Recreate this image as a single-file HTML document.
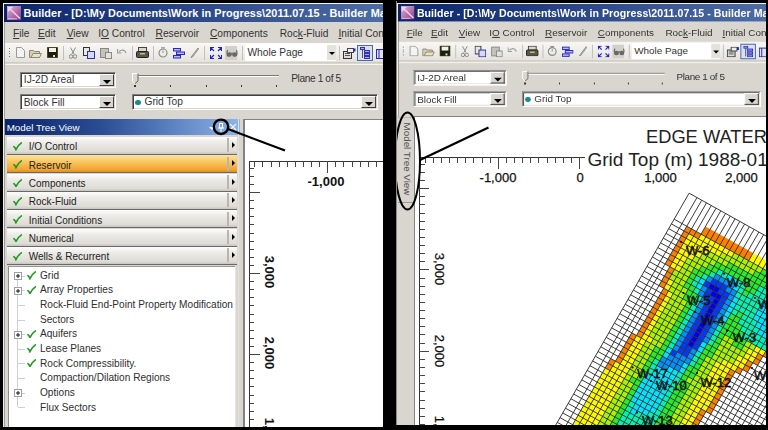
<!DOCTYPE html>
<html><head><meta charset="utf-8">
<style>
*{box-sizing:border-box}
html,body{margin:0;padding:0}
body{width:768px;height:430px;background:#000;position:relative;overflow:hidden;font-family:"Liberation Sans",sans-serif;color:#1a1a1a}
.a{position:absolute}
.chrome{position:absolute;left:0;top:0;width:382px;height:117px;background:#d9d6cf;transform-origin:0 0}
.title{left:1px;top:1px;width:381px;height:18px;background:linear-gradient(90deg,#0a246a 0px,#a6caf0 880px)}
.combo{background:#fff;border:1px solid #808080;border-right-color:#fff;border-bottom-color:#fff;box-shadow:inset 1px 1px 0 #404040, inset -1px -1px 0 #d9d6cf}
.dd{position:absolute;top:1px;right:1px;bottom:1px;width:15px;background:#d9d6cf;border:1px solid;border-color:#fff #404040 #404040 #fff}
.dd:after{content:"";position:absolute;left:3px;top:5px;border-left:4px solid transparent;border-right:4px solid transparent;border-top:4px solid #000}
.btn{position:absolute;left:3.8px;width:230.5px;height:18.2px;background:linear-gradient(#fdfdfc,#eceae6 35%,#dedcd6 85%,#c6c4be);border-bottom:1.6px solid #6a6a6a}
.btn.or{background:linear-gradient(#fde4a0,#f8c660 40%,#f2a532 85%,#e09020)}
.btn .bt{position:absolute;left:22px;top:5.4px;font-size:10px;line-height:1;white-space:nowrap;color:#222}
.btn .sp{position:absolute;left:220.5px;top:1.5px;width:1.5px;height:14px;background:#b8b6b0}
.btn .ar{position:absolute;left:225px;top:5px;border-top:3px solid transparent;border-bottom:3px solid transparent;border-left:3px solid #000}
.ck{position:absolute}
.tri{position:absolute;font-size:10.2px;line-height:1;white-space:nowrap;color:#222}
</style></head><body>

<!-- ================= LEFT PANEL ================= -->
<div class="a" id="L" style="left:3px;top:3px;width:380px;height:424px;background:#d9d6cf;overflow:hidden">
  <div class="chrome"><div class="a" style="left:0;top:0;width:382px;height:1px;background:#f4f3ee"></div>
<div class="a" style="left:0;top:0;width:1px;height:116px;background:#f4f3ee"></div>
<div class="a" style="left:1px;top:1px;width:1px;height:116px;background:#a09e98"></div>
<div class="a title"></div>
<svg class="a" style="left:3.5px;top:3px" width="14" height="14" viewBox="0 0 14 14"><defs><linearGradient id="ig" x1="0" y1="0" x2="1" y2="1"><stop offset="0" stop-color="#e2b4de"/><stop offset="1" stop-color="#8a3a80"/></linearGradient></defs><rect width="14" height="14" fill="url(#ig)"/><path d="M1 1 L6 1 L1 6z" fill="#f4dcf2"/><path d="M2 2 L13 12.5" stroke="#f0d0ee" stroke-width="1.5" fill="none"/><rect x="1" y="12.3" width="9" height="0.9" fill="#f0dcee" opacity="0.8"/></svg>
<div class="a " style="left:20.5px;top:4.67px;font-size:10.9px;line-height:1;white-space:nowrap;font-weight:bold;color:#fff;letter-spacing:0.065px">Builder - [D:\My Documents\Work in Progress\2011.07.15 - Builder Manager]</div>
<div class="a " style="left:10px;top:26.17px;font-size:10.2px;line-height:1;white-space:nowrap;color:#333"><u>F</u>ile</div>
<div class="a " style="left:35px;top:26.17px;font-size:10.2px;line-height:1;white-space:nowrap;color:#333"><u>E</u>dit</div>
<div class="a " style="left:63.7px;top:26.17px;font-size:10.2px;line-height:1;white-space:nowrap;color:#333"><u>V</u>iew</div>
<div class="a " style="left:95.2px;top:26.17px;font-size:10.2px;line-height:1;white-space:nowrap;color:#333">I<u>O</u> Control</div>
<div class="a " style="left:152.6px;top:26.17px;font-size:10.2px;line-height:1;white-space:nowrap;color:#333"><u>R</u>eservoir</div>
<div class="a " style="left:207px;top:26.17px;font-size:10.2px;line-height:1;white-space:nowrap;color:#333"><u>C</u>omponents</div>
<div class="a " style="left:276.7px;top:26.17px;font-size:10.2px;line-height:1;white-space:nowrap;color:#333">Roc<u>k</u>-Fluid</div>
<div class="a " style="left:335.5px;top:26.17px;font-size:10.2px;line-height:1;white-space:nowrap;color:#333"><u>I</u>nitial Conditions</div>
<div class="a" style="left:2px;top:39.8px;width:380px;height:19px;background:linear-gradient(#f7f6f3,#eeece8 55%,#e4e2dc);border-top:1px solid #fbfbf9"></div>
<div class="a" style="left:2px;top:58.5px;width:380px;height:1.5px;background:#cfccc5"></div>
<div class="a" style="left:2px;top:60.5px;width:380px;height:1px;background:#f6f5f2"></div>
<div class="a" style="left:6px;top:45.0px;width:1.2px;height:1.2px;background:#777"></div>
<div class="a" style="left:6px;top:47.5px;width:1.2px;height:1.2px;background:#777"></div>
<div class="a" style="left:6px;top:50.0px;width:1.2px;height:1.2px;background:#777"></div>
<div class="a" style="left:6px;top:52.5px;width:1.2px;height:1.2px;background:#777"></div>
<svg class="a" style="left:12px;top:44px" width="11" height="11"><path d="M1.5 0.5h5l3 3v7h-8z" fill="#f4f4f2" stroke="#9a9a96"/></svg>
<svg class="a" style="left:26px;top:44px" width="13" height="11"><path d="M0.5 3.5h4l1 1h5v6h-10z" fill="#d8cfa8" stroke="#8c887c"/><path d="M2 10.5l2-4h8.5l-2 4z" fill="#e8e2c4" stroke="#8c887c"/></svg>
<svg class="a" style="left:44px;top:44px" width="11" height="11"><rect x="0" y="0" width="11" height="11" fill="#1c1c10"/><rect x="2" y="1" width="7" height="4" fill="#f2f2ea"/><rect x="0" y="0" width="11" height="11" fill="none" stroke="#7a7a20" stroke-width="1"/><rect x="6" y="8" width="2" height="2" fill="#ddd"/></svg>
<div class="a" style="left:59.5px;top:43px;width:1px;height:14px;background:#c2c0ba"></div>
<svg class="a" style="left:66px;top:44px" width="8" height="12"><path d="M1.5 0.5 L5 7 M6.5 0.5 L3 7" stroke="#8a8a86" stroke-width="1" fill="none"/><circle cx="2" cy="9.5" r="1.8" fill="none" stroke="#8a8a86"/><circle cx="6" cy="9.5" r="1.8" fill="none" stroke="#8a8a86"/></svg>
<svg class="a" style="left:80px;top:44px" width="12" height="12"><rect x="0.5" y="0.5" width="6" height="8" fill="#e8e8e4" stroke="#333"/><rect x="4.5" y="4.5" width="7" height="7" fill="#d6d8f0" stroke="#3030b0"/></svg>
<svg class="a" style="left:97px;top:44px" width="12" height="12"><rect x="0.5" y="1.5" width="8" height="9" fill="#c4c2bc" stroke="#8a8884"/><rect x="5.5" y="5.5" width="6" height="6" fill="#e4e2dc" stroke="#8a8884"/></svg>
<svg class="a" style="left:114px;top:45px" width="10" height="9"><path d="M2 3.5 Q7 0 9 5" stroke="#9a9894" stroke-width="1.2" fill="none"/><path d="M0.5 1v4h4" stroke="#9a9894" stroke-width="1.2" fill="none"/></svg>
<div class="a" style="left:128.5px;top:43px;width:1px;height:14px;background:#c2c0ba"></div>
<svg class="a" style="left:132.5px;top:44px" width="13" height="11"><rect x="2.5" y="0.5" width="8" height="4" fill="#d8d8d0" stroke="#444"/><rect x="0.5" y="4.5" width="12" height="6" rx="1" fill="#555" stroke="#222"/><rect x="4" y="6" width="5" height="1.5" fill="#d8c040"/></svg>
<div class="a" style="left:149.5px;top:43px;width:1px;height:14px;background:#c2c0ba"></div>
<svg class="a" style="left:154.5px;top:44px" width="10" height="11"><circle cx="5" cy="6" r="4" fill="none" stroke="#8c8a84" stroke-width="1.2"/><path d="M5 6V3.5M3 0.8h4" stroke="#8c8a84"/></svg>
<svg class="a" style="left:170px;top:44px" width="12" height="12"><rect x="0.5" y="1.5" width="7" height="2.5" fill="#b8bcf0" stroke="#2828c0"/><rect x="3.5" y="5" width="8" height="2.5" fill="#b8bcf0" stroke="#2828c0"/><rect x="0.5" y="8.5" width="7" height="2.5" fill="#b8bcf0" stroke="#2828c0"/></svg>
<svg class="a" style="left:186.5px;top:44px" width="9" height="11"><path d="M8 1 L2 9 L1 10.5 L2.5 10 L8.5 2z" fill="#e8e6e0" stroke="#8c8a84"/></svg>
<div class="a" style="left:200.5px;top:43px;width:1px;height:14px;background:#c2c0ba"></div>
<svg class="a" style="left:207px;top:44px" width="12" height="12"><path d="M0.5 4V0.5H4M8 0.5h3.5V4M11.5 8v3.5H8M4 11.5H0.5V8M1 1l3 3M11 1l-3 3M11 11l-3-3M1 11l3-3" stroke="#2020c8" stroke-width="1.2" fill="none"/></svg>
<div class="a" style="left:222px;top:43px;width:12px;height:14px;background:#d2d0ca"></div>
<svg class="a" style="left:222.5px;top:46px" width="12" height="9"><path d="M1.5 1 L0.8 4.5" stroke="#6a6864" stroke-width="1.2"/><path d="M10.5 1 L11.2 4.5" stroke="#6a6864" stroke-width="1.2"/><ellipse cx="3.2" cy="5.5" rx="2.6" ry="2.3" fill="#6a6864"/><ellipse cx="8.8" cy="5.5" rx="2.6" ry="2.3" fill="#6a6864"/><path d="M5 4.5 Q6 3.5 7 4.5" stroke="#6a6864" stroke-width="1" fill="none"/></svg>
<div class="a" style="left:238.5px;top:43px;width:1px;height:14px;background:#c2c0ba"></div>
<div class="a" style="left:242px;top:41px;width:91px;height:17px;background:#fff"></div>
<div class="a" style="left:323.5px;top:42px;width:9.5px;height:15px;background:#e4e2dc"></div>
<div class="a" style="left:325.5px;top:48.5px;border-left:3px solid transparent;border-right:3px solid transparent;border-top:3px solid #000"></div>
<div class="a " style="left:244.5px;top:45.07px;font-size:10.2px;line-height:1;white-space:nowrap;color:#333">Whole Page</div>
<div class="a" style="left:335.5px;top:43px;width:1px;height:14px;background:#c2c0ba"></div>
<svg class="a" style="left:339.5px;top:45px" width="13" height="11"><rect x="0.5" y="3.5" width="8" height="7" fill="#ddd" stroke="#333"/><path d="M2 5.5h5M2 7.5h5" stroke="#555"/><rect x="4.5" y="0.5" width="6" height="4" fill="#eee" stroke="#444"/><rect x="10.5" y="0.5" width="2" height="3" fill="#2828b0"/></svg>
<div class="a" style="left:354px;top:42px;width:16px;height:16px;background:#dde0ea;border:1px solid #4a6aa8"></div>
<svg class="a" style="left:357px;top:44px" width="10" height="12"><rect x="0.5" y="0.5" width="4" height="2" fill="#a8b0f0" stroke="#3030c0"/><path d="M2.5 2.5V11" stroke="#555"/><rect x="4.5" y="3.5" width="5" height="2" fill="#a8b0f0" stroke="#3030c0"/><rect x="4.5" y="6.5" width="5" height="2" fill="#a8b0f0" stroke="#3030c0"/><rect x="4.5" y="9.5" width="5" height="2" fill="#a8b0f0" stroke="#3030c0"/></svg>
<svg class="a" style="left:373px;top:45px" width="10" height="11"><rect x="0.5" y="1.5" width="8" height="9" fill="#e0e0f0" stroke="#2828b0"/><path d="M3 1.5v9" stroke="#2828b0"/><circle cx="9" cy="1.5" r="1.5" fill="#c8b820"/></svg>
<div class="a combo" style="left:17.3px;top:68.5px;width:95.3px;height:16px"><div class="dd"></div><div class="a " style="left:2.5px;top:2.97px;font-size:10.2px;line-height:1;white-space:nowrap;color:#333">IJ-2D Areal</div></div>
<div class="a combo" style="left:17.3px;top:90.9px;width:95.3px;height:16px"><div class="dd"></div><div class="a " style="left:2.5px;top:2.97px;font-size:10.2px;line-height:1;white-space:nowrap;color:#333">Block Fill</div></div>
<div class="a combo" style="left:129px;top:90.5px;width:245.7px;height:16px"><div class="dd"></div><div class="a" style="left:2.2px;top:5.4px;width:5.5px;height:5.5px;border-radius:50%;background:#1a8a8a"></div><div class="a " style="left:11.5px;top:2.97px;font-size:10.2px;line-height:1;white-space:nowrap;color:#333">Grid Top</div></div>
<div class="a" style="left:132px;top:72px;width:144px;height:1px;background:#7a7872"></div>
<div class="a" style="left:132px;top:73px;width:144px;height:1px;background:#fff"></div>
<svg class="a" style="left:128.5px;top:69.5px" width="7" height="11"><path d="M0.5 0.5h5.5v7.5l-3 2.5l-2.5-2.5z" fill="#d9d6cf" stroke="#fff"/><path d="M6 0.5v7.5l-3 2.5" stroke="#555" fill="none"/></svg>
<div class="a" style="left:131.4px;top:82.3px;width:1.2px;height:1.5px;background:#333"></div>
<div class="a" style="left:166.7px;top:82.3px;width:1.2px;height:1.5px;background:#333"></div>
<div class="a" style="left:202.5px;top:82.3px;width:1.2px;height:1.5px;background:#333"></div>
<div class="a" style="left:238px;top:82.3px;width:1.2px;height:1.5px;background:#333"></div>
<div class="a" style="left:273px;top:82.3px;width:1.2px;height:1.5px;background:#333"></div>
<div class="a " style="left:288.2px;top:70.67px;font-size:10.2px;line-height:1;white-space:nowrap;color:#333;letter-spacing:-0.4px">Plane 1 of 5</div></div>
  <div class="a" style="left:2px;top:116px;width:235px;height:16px;background:linear-gradient(90deg,#0a246a 0%,#2a4c92 40%,#5a80c0 70%,#90b4e6 100%)"></div>
<div class="a " style="left:3.7px;top:120.00px;font-size:9.8px;line-height:1;white-space:nowrap;color:#fff">Model Tree View</div>
<div class="a" style="left:205.5px;top:123.5px;border-left:3px solid transparent;border-right:3px solid transparent;border-top:3px solid #fff"></div>
<svg class="a" style="left:213px;top:119px" width="10" height="11"><path d="M3 1.5h4M3.5 1.5v4.5h3v-4.5M2 6h6M5 6v4" stroke="#fff" stroke-width="1" fill="none"/></svg>
<svg class="a" style="left:226px;top:120px" width="8" height="8"><path d="M1 1l6 6M7 1l-6 6" stroke="#eef4ff" stroke-width="1.2"/></svg>
<div class="btn" style="top:133.90px"><svg class="ck" style="left:5.8px;top:5.2px" width="9" height="8.5" viewBox="0 0 9 8.5"><path d="M0.9 4.6 Q2.1 5.4 2.9 7.6 Q4.9 3.2 8.4 0.9" stroke="#1e9a1e" stroke-width="1.6" fill="none" stroke-linecap="round"/></svg><div class="bt">I/O Control</div><div class="sp"></div><div class="ar"></div></div>
<div class="btn or" style="top:152.23px"><svg class="ck" style="left:5.8px;top:5.2px" width="9" height="8.5" viewBox="0 0 9 8.5"><path d="M0.9 4.6 Q2.1 5.4 2.9 7.6 Q4.9 3.2 8.4 0.9" stroke="#1e9a1e" stroke-width="1.6" fill="none" stroke-linecap="round"/></svg><div class="bt">Reservoir</div><div class="sp"></div><div class="ar"></div></div>
<div class="btn" style="top:170.56px"><svg class="ck" style="left:5.8px;top:5.2px" width="9" height="8.5" viewBox="0 0 9 8.5"><path d="M0.9 4.6 Q2.1 5.4 2.9 7.6 Q4.9 3.2 8.4 0.9" stroke="#1e9a1e" stroke-width="1.6" fill="none" stroke-linecap="round"/></svg><div class="bt">Components</div><div class="sp"></div><div class="ar"></div></div>
<div class="btn" style="top:188.89px"><svg class="ck" style="left:5.8px;top:5.2px" width="9" height="8.5" viewBox="0 0 9 8.5"><path d="M0.9 4.6 Q2.1 5.4 2.9 7.6 Q4.9 3.2 8.4 0.9" stroke="#1e9a1e" stroke-width="1.6" fill="none" stroke-linecap="round"/></svg><div class="bt">Rock-Fluid</div><div class="sp"></div><div class="ar"></div></div>
<div class="btn" style="top:207.22px"><svg class="ck" style="left:5.8px;top:5.2px" width="9" height="8.5" viewBox="0 0 9 8.5"><path d="M0.9 4.6 Q2.1 5.4 2.9 7.6 Q4.9 3.2 8.4 0.9" stroke="#1e9a1e" stroke-width="1.6" fill="none" stroke-linecap="round"/></svg><div class="bt">Initial Conditions</div><div class="sp"></div><div class="ar"></div></div>
<div class="btn" style="top:225.55px"><svg class="ck" style="left:5.8px;top:5.2px" width="9" height="8.5" viewBox="0 0 9 8.5"><path d="M0.9 4.6 Q2.1 5.4 2.9 7.6 Q4.9 3.2 8.4 0.9" stroke="#1e9a1e" stroke-width="1.6" fill="none" stroke-linecap="round"/></svg><div class="bt">Numerical</div><div class="sp"></div><div class="ar"></div></div>
<div class="btn" style="top:243.88px"><svg class="ck" style="left:5.8px;top:5.2px" width="9" height="8.5" viewBox="0 0 9 8.5"><path d="M0.9 4.6 Q2.1 5.4 2.9 7.6 Q4.9 3.2 8.4 0.9" stroke="#1e9a1e" stroke-width="1.6" fill="none" stroke-linecap="round"/></svg><div class="bt">Wells &amp; Recurrent</div><div class="sp"></div><div class="ar"></div></div>
<div class="a" style="left:0;top:116px;width:1px;height:310px;background:#f2f1ec"></div>
<div class="a" style="left:1px;top:116px;width:1.2px;height:310px;background:#9c9a94"></div>
<div class="a" style="left:4.7px;top:263px;width:227.5px;height:170px;background:#fff;border-left:1.5px solid #8e8c86;border-top:1px solid #9a9892"></div>
<div class="a" style="left:14.3px;top:272.6px;width:1px;height:131.8px;border-left:1px solid #cfcfcf"></div>
<div class="a" style="left:15px;top:272.6px;width:7px;height:1px;border-top:1px solid #cfcfcf"></div>
<svg class="a" style="left:11px;top:269.1px" width="8" height="8"><rect x="0.5" y="0.5" width="7" height="7" fill="#fff" stroke="#a0a0a0"/><path d="M2 4h4M4 2v4" stroke="#111" stroke-width="1"/></svg>
<svg class="ck" style="left:24.2px;top:268.1px" width="9" height="8.5" viewBox="0 0 9 8.5"><path d="M0.9 4.6 Q2.1 5.4 2.9 7.6 Q4.9 3.2 8.4 0.9" stroke="#1e9a1e" stroke-width="1.6" fill="none" stroke-linecap="round"/></svg>
<div class="a " style="left:37px;top:267.75px;font-size:10.1px;line-height:1;white-space:nowrap;color:#2e2e2e">Grid</div>
<div class="a" style="left:15px;top:287.2px;width:7px;height:1px;border-top:1px solid #cfcfcf"></div>
<svg class="a" style="left:11px;top:283.7px" width="8" height="8"><rect x="0.5" y="0.5" width="7" height="7" fill="#fff" stroke="#a0a0a0"/><path d="M2 4h4M4 2v4" stroke="#111" stroke-width="1"/></svg>
<svg class="ck" style="left:24.2px;top:282.7px" width="9" height="8.5" viewBox="0 0 9 8.5"><path d="M0.9 4.6 Q2.1 5.4 2.9 7.6 Q4.9 3.2 8.4 0.9" stroke="#1e9a1e" stroke-width="1.6" fill="none" stroke-linecap="round"/></svg>
<div class="a " style="left:37px;top:282.39px;font-size:10.1px;line-height:1;white-space:nowrap;color:#2e2e2e">Array Properties</div>
<div class="a" style="left:15px;top:301.9px;width:7px;height:1px;border-top:1px solid #cfcfcf"></div>
<div class="a " style="left:37px;top:297.03px;font-size:10.1px;line-height:1;white-space:nowrap;color:#2e2e2e">Rock-Fluid End-Point Property Modification</div>
<div class="a" style="left:15px;top:316.5px;width:7px;height:1px;border-top:1px solid #cfcfcf"></div>
<div class="a " style="left:37px;top:311.67px;font-size:10.1px;line-height:1;white-space:nowrap;color:#2e2e2e">Sectors</div>
<div class="a" style="left:15px;top:331.2px;width:7px;height:1px;border-top:1px solid #cfcfcf"></div>
<svg class="a" style="left:11px;top:327.7px" width="8" height="8"><rect x="0.5" y="0.5" width="7" height="7" fill="#fff" stroke="#a0a0a0"/><path d="M2 4h4M4 2v4" stroke="#111" stroke-width="1"/></svg>
<svg class="ck" style="left:24.2px;top:326.7px" width="9" height="8.5" viewBox="0 0 9 8.5"><path d="M0.9 4.6 Q2.1 5.4 2.9 7.6 Q4.9 3.2 8.4 0.9" stroke="#1e9a1e" stroke-width="1.6" fill="none" stroke-linecap="round"/></svg>
<div class="a " style="left:37px;top:326.31px;font-size:10.1px;line-height:1;white-space:nowrap;color:#2e2e2e">Aquifers</div>
<div class="a" style="left:15px;top:345.8px;width:7px;height:1px;border-top:1px solid #cfcfcf"></div>
<svg class="ck" style="left:24.2px;top:341.3px" width="9" height="8.5" viewBox="0 0 9 8.5"><path d="M0.9 4.6 Q2.1 5.4 2.9 7.6 Q4.9 3.2 8.4 0.9" stroke="#1e9a1e" stroke-width="1.6" fill="none" stroke-linecap="round"/></svg>
<div class="a " style="left:37px;top:340.95px;font-size:10.1px;line-height:1;white-space:nowrap;color:#2e2e2e">Lease Planes</div>
<div class="a" style="left:15px;top:360.4px;width:7px;height:1px;border-top:1px solid #cfcfcf"></div>
<svg class="ck" style="left:24.2px;top:355.9px" width="9" height="8.5" viewBox="0 0 9 8.5"><path d="M0.9 4.6 Q2.1 5.4 2.9 7.6 Q4.9 3.2 8.4 0.9" stroke="#1e9a1e" stroke-width="1.6" fill="none" stroke-linecap="round"/></svg>
<div class="a " style="left:37px;top:355.59px;font-size:10.1px;line-height:1;white-space:nowrap;color:#2e2e2e">Rock Compressibility.</div>
<div class="a" style="left:15px;top:375.1px;width:7px;height:1px;border-top:1px solid #cfcfcf"></div>
<div class="a " style="left:37px;top:370.23px;font-size:10.1px;line-height:1;white-space:nowrap;color:#2e2e2e">Compaction/Dilation Regions</div>
<div class="a" style="left:15px;top:389.7px;width:7px;height:1px;border-top:1px solid #cfcfcf"></div>
<svg class="a" style="left:11px;top:386.2px" width="8" height="8"><rect x="0.5" y="0.5" width="7" height="7" fill="#fff" stroke="#a0a0a0"/><path d="M2 4h4M4 2v4" stroke="#111" stroke-width="1"/></svg>
<div class="a " style="left:37px;top:384.87px;font-size:10.1px;line-height:1;white-space:nowrap;color:#2e2e2e">Options</div>
<div class="a" style="left:15px;top:404.4px;width:7px;height:1px;border-top:1px solid #cfcfcf"></div>
<div class="a " style="left:37px;top:399.51px;font-size:10.1px;line-height:1;white-space:nowrap;color:#2e2e2e">Flux Sectors</div>
<div class="a" style="left:232px;top:263px;width:1px;height:170px;background:#e8e6e0"></div>
<div class="a" style="left:234.5px;top:116px;width:1px;height:310px;background:#e4e2dc"></div>
<div class="a" style="left:239.5px;top:116.3px;width:2px;height:310px;background:#848280"></div>
<div class="a" style="left:241.5px;top:116.3px;width:140px;height:310px;background:#fff;border-top:1px solid #848280"></div>
<div class="a" style="left:245.6px;top:158.2px;width:140px;height:1.2px;background:#333"></div>
<div class="a" style="left:245.6px;top:158.2px;width:1.2px;height:270px;background:#333"></div>
<div class="a" style="left:251.3px;top:158.2px;width:1.1px;height:5.8px;background:#444"></div>
<div class="a" style="left:259.4px;top:158.2px;width:1.1px;height:5.8px;background:#444"></div>
<div class="a" style="left:267.5px;top:158.2px;width:1.1px;height:5.8px;background:#444"></div>
<div class="a" style="left:275.6px;top:158.2px;width:1.1px;height:5.8px;background:#444"></div>
<div class="a" style="left:283.7px;top:158.2px;width:1.1px;height:5.8px;background:#444"></div>
<div class="a" style="left:291.8px;top:158.2px;width:1.1px;height:5.8px;background:#444"></div>
<div class="a" style="left:299.9px;top:158.2px;width:1.1px;height:5.8px;background:#444"></div>
<div class="a" style="left:308.0px;top:158.2px;width:1.1px;height:5.8px;background:#444"></div>
<div class="a" style="left:316.1px;top:158.2px;width:1.1px;height:5.8px;background:#444"></div>
<div class="a" style="left:324.2px;top:158.2px;width:1.1px;height:11.6px;background:#444"></div>
<div class="a" style="left:332.3px;top:158.2px;width:1.1px;height:5.8px;background:#444"></div>
<div class="a" style="left:340.4px;top:158.2px;width:1.1px;height:5.8px;background:#444"></div>
<div class="a" style="left:348.5px;top:158.2px;width:1.1px;height:5.8px;background:#444"></div>
<div class="a" style="left:356.6px;top:158.2px;width:1.1px;height:5.8px;background:#444"></div>
<div class="a" style="left:364.7px;top:158.2px;width:1.1px;height:5.8px;background:#444"></div>
<div class="a" style="left:372.8px;top:158.2px;width:1.1px;height:5.8px;background:#444"></div>
<div class="a" style="left:380.9px;top:158.2px;width:1.1px;height:5.8px;background:#444"></div>
<div class="a" style="left:245.6px;top:164.7px;width:5.7px;height:1.1px;background:#444"></div>
<div class="a" style="left:245.6px;top:172.8px;width:5.7px;height:1.1px;background:#444"></div>
<div class="a" style="left:245.6px;top:180.9px;width:5.7px;height:1.1px;background:#444"></div>
<div class="a" style="left:245.6px;top:189.0px;width:11px;height:1.1px;background:#444"></div>
<div class="a" style="left:245.6px;top:197.1px;width:5.7px;height:1.1px;background:#444"></div>
<div class="a" style="left:245.6px;top:205.2px;width:5.7px;height:1.1px;background:#444"></div>
<div class="a" style="left:245.6px;top:213.3px;width:5.7px;height:1.1px;background:#444"></div>
<div class="a" style="left:245.6px;top:221.4px;width:5.7px;height:1.1px;background:#444"></div>
<div class="a" style="left:245.6px;top:229.5px;width:5.7px;height:1.1px;background:#444"></div>
<div class="a" style="left:245.6px;top:237.6px;width:5.7px;height:1.1px;background:#444"></div>
<div class="a" style="left:245.6px;top:245.7px;width:5.7px;height:1.1px;background:#444"></div>
<div class="a" style="left:245.6px;top:253.8px;width:5.7px;height:1.1px;background:#444"></div>
<div class="a" style="left:245.6px;top:261.9px;width:5.7px;height:1.1px;background:#444"></div>
<div class="a" style="left:245.6px;top:270.0px;width:11px;height:1.1px;background:#444"></div>
<div class="a" style="left:245.6px;top:278.1px;width:5.7px;height:1.1px;background:#444"></div>
<div class="a" style="left:245.6px;top:286.2px;width:5.7px;height:1.1px;background:#444"></div>
<div class="a" style="left:245.6px;top:294.3px;width:5.7px;height:1.1px;background:#444"></div>
<div class="a" style="left:245.6px;top:302.4px;width:5.7px;height:1.1px;background:#444"></div>
<div class="a" style="left:245.6px;top:310.5px;width:5.7px;height:1.1px;background:#444"></div>
<div class="a" style="left:245.6px;top:318.6px;width:5.7px;height:1.1px;background:#444"></div>
<div class="a" style="left:245.6px;top:326.7px;width:5.7px;height:1.1px;background:#444"></div>
<div class="a" style="left:245.6px;top:334.8px;width:5.7px;height:1.1px;background:#444"></div>
<div class="a" style="left:245.6px;top:342.9px;width:5.7px;height:1.1px;background:#444"></div>
<div class="a" style="left:245.6px;top:351.0px;width:11px;height:1.1px;background:#444"></div>
<div class="a" style="left:245.6px;top:359.1px;width:5.7px;height:1.1px;background:#444"></div>
<div class="a" style="left:245.6px;top:367.2px;width:5.7px;height:1.1px;background:#444"></div>
<div class="a" style="left:245.6px;top:375.3px;width:5.7px;height:1.1px;background:#444"></div>
<div class="a" style="left:245.6px;top:383.4px;width:5.7px;height:1.1px;background:#444"></div>
<div class="a" style="left:245.6px;top:391.5px;width:5.7px;height:1.1px;background:#444"></div>
<div class="a" style="left:245.6px;top:399.6px;width:5.7px;height:1.1px;background:#444"></div>
<div class="a" style="left:245.6px;top:407.7px;width:5.7px;height:1.1px;background:#444"></div>
<div class="a" style="left:245.6px;top:415.8px;width:5.7px;height:1.1px;background:#444"></div>
<div class="a" style="left:245.6px;top:423.9px;width:5.7px;height:1.1px;background:#444"></div>
<div class="a " style="left:304.5px;top:171.60px;font-size:13px;line-height:1;white-space:nowrap;font-weight:bold;color:#111">-1,000</div>
<div class="a" style="left:246px;top:262px;width:40px;height:14px;text-align:center;font-size:13px;line-height:14px;font-weight:bold;color:#111;transform:rotate(90deg)">3,000</div>
<div class="a" style="left:246px;top:343px;width:40px;height:14px;text-align:center;font-size:13px;line-height:14px;font-weight:bold;color:#111;transform:rotate(90deg)">2,000</div>
<div class="a" style="left:246px;top:424px;width:40px;height:14px;text-align:center;font-size:13px;line-height:14px;font-weight:bold;color:#111;transform:rotate(90deg)">1,000</div>
<svg class="a" style="left:0;top:0" width="380" height="424"><circle cx="218" cy="123.8" r="7.2" fill="none" stroke="#000" stroke-width="2.4"/><path d="M225 126 L282 147.5" stroke="#000" stroke-width="2.2"/></svg>
</div>

<!-- ================= RIGHT PANEL ================= -->
<div class="a" id="R" style="left:397px;top:3px;width:369px;height:422.4px;background:#d9d6cf;overflow:hidden">
  <div class="chrome" style="transform:scale(0.97)"><div class="a" style="left:0;top:0;width:382px;height:1px;background:#f4f3ee"></div>
<div class="a" style="left:0;top:0;width:1px;height:116px;background:#f4f3ee"></div>
<div class="a" style="left:1px;top:1px;width:1px;height:116px;background:#a09e98"></div>
<div class="a title"></div>
<svg class="a" style="left:3.5px;top:3px" width="14" height="14" viewBox="0 0 14 14"><defs><linearGradient id="ig" x1="0" y1="0" x2="1" y2="1"><stop offset="0" stop-color="#e2b4de"/><stop offset="1" stop-color="#8a3a80"/></linearGradient></defs><rect width="14" height="14" fill="url(#ig)"/><path d="M1 1 L6 1 L1 6z" fill="#f4dcf2"/><path d="M2 2 L13 12.5" stroke="#f0d0ee" stroke-width="1.5" fill="none"/><rect x="1" y="12.3" width="9" height="0.9" fill="#f0dcee" opacity="0.8"/></svg>
<div class="a " style="left:20.5px;top:4.67px;font-size:10.9px;line-height:1;white-space:nowrap;font-weight:bold;color:#fff;letter-spacing:0.065px">Builder - [D:\My Documents\Work in Progress\2011.07.15 - Builder Manager]</div>
<div class="a " style="left:10px;top:26.17px;font-size:10.2px;line-height:1;white-space:nowrap;color:#333"><u>F</u>ile</div>
<div class="a " style="left:35px;top:26.17px;font-size:10.2px;line-height:1;white-space:nowrap;color:#333"><u>E</u>dit</div>
<div class="a " style="left:63.7px;top:26.17px;font-size:10.2px;line-height:1;white-space:nowrap;color:#333"><u>V</u>iew</div>
<div class="a " style="left:95.2px;top:26.17px;font-size:10.2px;line-height:1;white-space:nowrap;color:#333">I<u>O</u> Control</div>
<div class="a " style="left:152.6px;top:26.17px;font-size:10.2px;line-height:1;white-space:nowrap;color:#333"><u>R</u>eservoir</div>
<div class="a " style="left:207px;top:26.17px;font-size:10.2px;line-height:1;white-space:nowrap;color:#333"><u>C</u>omponents</div>
<div class="a " style="left:276.7px;top:26.17px;font-size:10.2px;line-height:1;white-space:nowrap;color:#333">Roc<u>k</u>-Fluid</div>
<div class="a " style="left:335.5px;top:26.17px;font-size:10.2px;line-height:1;white-space:nowrap;color:#333"><u>I</u>nitial Conditions</div>
<div class="a" style="left:2px;top:39.8px;width:380px;height:19px;background:linear-gradient(#f7f6f3,#eeece8 55%,#e4e2dc);border-top:1px solid #fbfbf9"></div>
<div class="a" style="left:2px;top:58.5px;width:380px;height:1.5px;background:#cfccc5"></div>
<div class="a" style="left:2px;top:60.5px;width:380px;height:1px;background:#f6f5f2"></div>
<div class="a" style="left:6px;top:45.0px;width:1.2px;height:1.2px;background:#777"></div>
<div class="a" style="left:6px;top:47.5px;width:1.2px;height:1.2px;background:#777"></div>
<div class="a" style="left:6px;top:50.0px;width:1.2px;height:1.2px;background:#777"></div>
<div class="a" style="left:6px;top:52.5px;width:1.2px;height:1.2px;background:#777"></div>
<svg class="a" style="left:12px;top:44px" width="11" height="11"><path d="M1.5 0.5h5l3 3v7h-8z" fill="#f4f4f2" stroke="#9a9a96"/></svg>
<svg class="a" style="left:26px;top:44px" width="13" height="11"><path d="M0.5 3.5h4l1 1h5v6h-10z" fill="#d8cfa8" stroke="#8c887c"/><path d="M2 10.5l2-4h8.5l-2 4z" fill="#e8e2c4" stroke="#8c887c"/></svg>
<svg class="a" style="left:44px;top:44px" width="11" height="11"><rect x="0" y="0" width="11" height="11" fill="#1c1c10"/><rect x="2" y="1" width="7" height="4" fill="#f2f2ea"/><rect x="0" y="0" width="11" height="11" fill="none" stroke="#7a7a20" stroke-width="1"/><rect x="6" y="8" width="2" height="2" fill="#ddd"/></svg>
<div class="a" style="left:59.5px;top:43px;width:1px;height:14px;background:#c2c0ba"></div>
<svg class="a" style="left:66px;top:44px" width="8" height="12"><path d="M1.5 0.5 L5 7 M6.5 0.5 L3 7" stroke="#8a8a86" stroke-width="1" fill="none"/><circle cx="2" cy="9.5" r="1.8" fill="none" stroke="#8a8a86"/><circle cx="6" cy="9.5" r="1.8" fill="none" stroke="#8a8a86"/></svg>
<svg class="a" style="left:80px;top:44px" width="12" height="12"><rect x="0.5" y="0.5" width="6" height="8" fill="#e8e8e4" stroke="#333"/><rect x="4.5" y="4.5" width="7" height="7" fill="#d6d8f0" stroke="#3030b0"/></svg>
<svg class="a" style="left:97px;top:44px" width="12" height="12"><rect x="0.5" y="1.5" width="8" height="9" fill="#c4c2bc" stroke="#8a8884"/><rect x="5.5" y="5.5" width="6" height="6" fill="#e4e2dc" stroke="#8a8884"/></svg>
<svg class="a" style="left:114px;top:45px" width="10" height="9"><path d="M2 3.5 Q7 0 9 5" stroke="#9a9894" stroke-width="1.2" fill="none"/><path d="M0.5 1v4h4" stroke="#9a9894" stroke-width="1.2" fill="none"/></svg>
<div class="a" style="left:128.5px;top:43px;width:1px;height:14px;background:#c2c0ba"></div>
<svg class="a" style="left:132.5px;top:44px" width="13" height="11"><rect x="2.5" y="0.5" width="8" height="4" fill="#d8d8d0" stroke="#444"/><rect x="0.5" y="4.5" width="12" height="6" rx="1" fill="#555" stroke="#222"/><rect x="4" y="6" width="5" height="1.5" fill="#d8c040"/></svg>
<div class="a" style="left:149.5px;top:43px;width:1px;height:14px;background:#c2c0ba"></div>
<svg class="a" style="left:154.5px;top:44px" width="10" height="11"><circle cx="5" cy="6" r="4" fill="none" stroke="#8c8a84" stroke-width="1.2"/><path d="M5 6V3.5M3 0.8h4" stroke="#8c8a84"/></svg>
<svg class="a" style="left:170px;top:44px" width="12" height="12"><rect x="0.5" y="1.5" width="7" height="2.5" fill="#b8bcf0" stroke="#2828c0"/><rect x="3.5" y="5" width="8" height="2.5" fill="#b8bcf0" stroke="#2828c0"/><rect x="0.5" y="8.5" width="7" height="2.5" fill="#b8bcf0" stroke="#2828c0"/></svg>
<svg class="a" style="left:186.5px;top:44px" width="9" height="11"><path d="M8 1 L2 9 L1 10.5 L2.5 10 L8.5 2z" fill="#e8e6e0" stroke="#8c8a84"/></svg>
<div class="a" style="left:200.5px;top:43px;width:1px;height:14px;background:#c2c0ba"></div>
<svg class="a" style="left:207px;top:44px" width="12" height="12"><path d="M0.5 4V0.5H4M8 0.5h3.5V4M11.5 8v3.5H8M4 11.5H0.5V8M1 1l3 3M11 1l-3 3M11 11l-3-3M1 11l3-3" stroke="#2020c8" stroke-width="1.2" fill="none"/></svg>
<div class="a" style="left:222px;top:43px;width:12px;height:14px;background:#d2d0ca"></div>
<svg class="a" style="left:222.5px;top:46px" width="12" height="9"><path d="M1.5 1 L0.8 4.5" stroke="#6a6864" stroke-width="1.2"/><path d="M10.5 1 L11.2 4.5" stroke="#6a6864" stroke-width="1.2"/><ellipse cx="3.2" cy="5.5" rx="2.6" ry="2.3" fill="#6a6864"/><ellipse cx="8.8" cy="5.5" rx="2.6" ry="2.3" fill="#6a6864"/><path d="M5 4.5 Q6 3.5 7 4.5" stroke="#6a6864" stroke-width="1" fill="none"/></svg>
<div class="a" style="left:238.5px;top:43px;width:1px;height:14px;background:#c2c0ba"></div>
<div class="a" style="left:242px;top:41px;width:91px;height:17px;background:#fff"></div>
<div class="a" style="left:323.5px;top:42px;width:9.5px;height:15px;background:#e4e2dc"></div>
<div class="a" style="left:325.5px;top:48.5px;border-left:3px solid transparent;border-right:3px solid transparent;border-top:3px solid #000"></div>
<div class="a " style="left:244.5px;top:45.07px;font-size:10.2px;line-height:1;white-space:nowrap;color:#333">Whole Page</div>
<div class="a" style="left:335.5px;top:43px;width:1px;height:14px;background:#c2c0ba"></div>
<svg class="a" style="left:339.5px;top:45px" width="13" height="11"><rect x="0.5" y="3.5" width="8" height="7" fill="#ddd" stroke="#333"/><path d="M2 5.5h5M2 7.5h5" stroke="#555"/><rect x="4.5" y="0.5" width="6" height="4" fill="#eee" stroke="#444"/><rect x="10.5" y="0.5" width="2" height="3" fill="#2828b0"/></svg>
<div class="a" style="left:354px;top:42px;width:16px;height:16px;background:#dde0ea;border:1px solid #4a6aa8"></div>
<svg class="a" style="left:357px;top:44px" width="10" height="12"><rect x="0.5" y="0.5" width="4" height="2" fill="#a8b0f0" stroke="#3030c0"/><path d="M2.5 2.5V11" stroke="#555"/><rect x="4.5" y="3.5" width="5" height="2" fill="#a8b0f0" stroke="#3030c0"/><rect x="4.5" y="6.5" width="5" height="2" fill="#a8b0f0" stroke="#3030c0"/><rect x="4.5" y="9.5" width="5" height="2" fill="#a8b0f0" stroke="#3030c0"/></svg>
<svg class="a" style="left:373px;top:45px" width="10" height="11"><rect x="0.5" y="1.5" width="8" height="9" fill="#e0e0f0" stroke="#2828b0"/><path d="M3 1.5v9" stroke="#2828b0"/><circle cx="9" cy="1.5" r="1.5" fill="#c8b820"/></svg>
<div class="a combo" style="left:17.3px;top:68.5px;width:95.3px;height:16px"><div class="dd"></div><div class="a " style="left:2.5px;top:2.97px;font-size:10.2px;line-height:1;white-space:nowrap;color:#333">IJ-2D Areal</div></div>
<div class="a combo" style="left:17.3px;top:90.9px;width:95.3px;height:16px"><div class="dd"></div><div class="a " style="left:2.5px;top:2.97px;font-size:10.2px;line-height:1;white-space:nowrap;color:#333">Block Fill</div></div>
<div class="a combo" style="left:129px;top:90.5px;width:245.7px;height:16px"><div class="dd"></div><div class="a" style="left:2.2px;top:5.4px;width:5.5px;height:5.5px;border-radius:50%;background:#1a8a8a"></div><div class="a " style="left:11.5px;top:2.97px;font-size:10.2px;line-height:1;white-space:nowrap;color:#333">Grid Top</div></div>
<div class="a" style="left:132px;top:72px;width:144px;height:1px;background:#7a7872"></div>
<div class="a" style="left:132px;top:73px;width:144px;height:1px;background:#fff"></div>
<svg class="a" style="left:128.5px;top:69.5px" width="7" height="11"><path d="M0.5 0.5h5.5v7.5l-3 2.5l-2.5-2.5z" fill="#d9d6cf" stroke="#fff"/><path d="M6 0.5v7.5l-3 2.5" stroke="#555" fill="none"/></svg>
<div class="a" style="left:131.4px;top:82.3px;width:1.2px;height:1.5px;background:#333"></div>
<div class="a" style="left:166.7px;top:82.3px;width:1.2px;height:1.5px;background:#333"></div>
<div class="a" style="left:202.5px;top:82.3px;width:1.2px;height:1.5px;background:#333"></div>
<div class="a" style="left:238px;top:82.3px;width:1.2px;height:1.5px;background:#333"></div>
<div class="a" style="left:273px;top:82.3px;width:1.2px;height:1.5px;background:#333"></div>
<div class="a " style="left:288.2px;top:70.67px;font-size:10.2px;line-height:1;white-space:nowrap;color:#333;letter-spacing:-0.4px">Plane 1 of 5</div></div>
  <div class="a" style="left:1px;top:114.3px;width:16px;height:86px;background:#d8d5ce;border-top:1px solid #b8b6b0;border-bottom:1px solid #9a9892"></div>
<div class="a" style="left:-30px;top:150px;width:80px;height:12px;font-size:9.8px;line-height:12px;text-align:center;white-space:nowrap;color:#505050;transform:rotate(90deg)">Model Tree View</div>
<div class="a" style="left:17px;top:112.9px;width:360px;height:320px;background:#fff;border-left:1.5px solid #848280;border-top:1.4px solid #848280"></div>
<div class="a" style="left:21.8px;top:154.2px;width:166px;height:1.2px;background:#333"></div>
<div class="a" style="left:21.8px;top:154.2px;width:1.2px;height:270px;background:#333"></div>
<div class="a" style="left:27.6px;top:154.2px;width:1.1px;height:5.8px;background:#444"></div>
<div class="a" style="left:35.8px;top:154.2px;width:1.1px;height:5.8px;background:#444"></div>
<div class="a" style="left:43.9px;top:154.2px;width:1.1px;height:5.8px;background:#444"></div>
<div class="a" style="left:52.0px;top:154.2px;width:1.1px;height:5.8px;background:#444"></div>
<div class="a" style="left:60.1px;top:154.2px;width:1.1px;height:5.8px;background:#444"></div>
<div class="a" style="left:68.3px;top:154.2px;width:1.1px;height:5.8px;background:#444"></div>
<div class="a" style="left:76.4px;top:154.2px;width:1.1px;height:5.8px;background:#444"></div>
<div class="a" style="left:84.5px;top:154.2px;width:1.1px;height:5.8px;background:#444"></div>
<div class="a" style="left:92.7px;top:154.2px;width:1.1px;height:5.8px;background:#444"></div>
<div class="a" style="left:100.8px;top:154.2px;width:1.1px;height:11.6px;background:#444"></div>
<div class="a" style="left:108.9px;top:154.2px;width:1.1px;height:5.8px;background:#444"></div>
<div class="a" style="left:117.1px;top:154.2px;width:1.1px;height:5.8px;background:#444"></div>
<div class="a" style="left:125.2px;top:154.2px;width:1.1px;height:5.8px;background:#444"></div>
<div class="a" style="left:133.3px;top:154.2px;width:1.1px;height:5.8px;background:#444"></div>
<div class="a" style="left:141.4px;top:154.2px;width:1.1px;height:5.8px;background:#444"></div>
<div class="a" style="left:149.6px;top:154.2px;width:1.1px;height:5.8px;background:#444"></div>
<div class="a" style="left:157.7px;top:154.2px;width:1.1px;height:5.8px;background:#444"></div>
<div class="a" style="left:165.8px;top:154.2px;width:1.1px;height:5.8px;background:#444"></div>
<div class="a" style="left:174.0px;top:154.2px;width:1.1px;height:5.8px;background:#444"></div>
<div class="a" style="left:182.1px;top:154.2px;width:1.1px;height:11.6px;background:#444"></div>
<div class="a" style="left:21.8px;top:160.7px;width:5.8px;height:1.1px;background:#444"></div>
<div class="a" style="left:21.8px;top:168.8px;width:5.8px;height:1.1px;background:#444"></div>
<div class="a" style="left:21.8px;top:177.0px;width:5.8px;height:1.1px;background:#444"></div>
<div class="a" style="left:21.8px;top:185.1px;width:10.5px;height:1.1px;background:#444"></div>
<div class="a" style="left:21.8px;top:193.2px;width:5.8px;height:1.1px;background:#444"></div>
<div class="a" style="left:21.8px;top:201.4px;width:5.8px;height:1.1px;background:#444"></div>
<div class="a" style="left:21.8px;top:209.5px;width:5.8px;height:1.1px;background:#444"></div>
<div class="a" style="left:21.8px;top:217.6px;width:5.8px;height:1.1px;background:#444"></div>
<div class="a" style="left:21.8px;top:225.8px;width:5.8px;height:1.1px;background:#444"></div>
<div class="a" style="left:21.8px;top:233.9px;width:5.8px;height:1.1px;background:#444"></div>
<div class="a" style="left:21.8px;top:242.0px;width:5.8px;height:1.1px;background:#444"></div>
<div class="a" style="left:21.8px;top:250.1px;width:5.8px;height:1.1px;background:#444"></div>
<div class="a" style="left:21.8px;top:258.3px;width:5.8px;height:1.1px;background:#444"></div>
<div class="a" style="left:21.8px;top:266.4px;width:10.5px;height:1.1px;background:#444"></div>
<div class="a" style="left:21.8px;top:274.5px;width:5.8px;height:1.1px;background:#444"></div>
<div class="a" style="left:21.8px;top:282.7px;width:5.8px;height:1.1px;background:#444"></div>
<div class="a" style="left:21.8px;top:290.8px;width:5.8px;height:1.1px;background:#444"></div>
<div class="a" style="left:21.8px;top:298.9px;width:5.8px;height:1.1px;background:#444"></div>
<div class="a" style="left:21.8px;top:307.1px;width:5.8px;height:1.1px;background:#444"></div>
<div class="a" style="left:21.8px;top:315.2px;width:5.8px;height:1.1px;background:#444"></div>
<div class="a" style="left:21.8px;top:323.3px;width:5.8px;height:1.1px;background:#444"></div>
<div class="a" style="left:21.8px;top:331.4px;width:5.8px;height:1.1px;background:#444"></div>
<div class="a" style="left:21.8px;top:339.6px;width:5.8px;height:1.1px;background:#444"></div>
<div class="a" style="left:21.8px;top:347.7px;width:10.5px;height:1.1px;background:#444"></div>
<div class="a" style="left:21.8px;top:355.8px;width:5.8px;height:1.1px;background:#444"></div>
<div class="a" style="left:21.8px;top:364.0px;width:5.8px;height:1.1px;background:#444"></div>
<div class="a" style="left:21.8px;top:372.1px;width:5.8px;height:1.1px;background:#444"></div>
<div class="a" style="left:21.8px;top:380.2px;width:5.8px;height:1.1px;background:#444"></div>
<div class="a" style="left:21.8px;top:388.4px;width:5.8px;height:1.1px;background:#444"></div>
<div class="a" style="left:21.8px;top:396.5px;width:5.8px;height:1.1px;background:#444"></div>
<div class="a" style="left:21.8px;top:404.6px;width:5.8px;height:1.1px;background:#444"></div>
<div class="a" style="left:21.8px;top:412.7px;width:5.8px;height:1.1px;background:#444"></div>
<div class="a" style="left:21.8px;top:420.9px;width:5.8px;height:1.1px;background:#444"></div>
<div class="a" style="left:21.8px;top:429.0px;width:10.5px;height:1.1px;background:#444"></div>
<div class="a" style="left:71px;top:167.5px;width:60px;text-align:center;font-size:13px;line-height:1;color:#111;-webkit-text-stroke:0.25px #111">-1,000</div>
<div class="a" style="left:153px;top:167.5px;width:60px;text-align:center;font-size:13px;line-height:1;color:#111;-webkit-text-stroke:0.25px #111">0</div>
<div class="a" style="left:233.5px;top:167.5px;width:60px;text-align:center;font-size:13px;line-height:1;color:#111;-webkit-text-stroke:0.25px #111">1,000</div>
<div class="a" style="left:314.5px;top:167.5px;width:60px;text-align:center;font-size:13px;line-height:1;color:#111;-webkit-text-stroke:0.25px #111">2,000</div>
<div class="a" style="left:21.5px;top:259px;width:40px;height:14px;text-align:center;font-size:13px;line-height:14px;color:#111;-webkit-text-stroke:0.25px #111;transform:rotate(90deg)">3,000</div>
<div class="a" style="left:21.5px;top:341px;width:40px;height:14px;text-align:center;font-size:13px;line-height:14px;color:#111;-webkit-text-stroke:0.25px #111;transform:rotate(90deg)">2,000</div>
<div class="a" style="left:21.5px;top:422px;width:40px;height:14px;text-align:center;font-size:13px;line-height:14px;color:#111;-webkit-text-stroke:0.25px #111;transform:rotate(90deg)">1,000</div>
<div class="a " style="left:249px;top:125.31px;font-size:18.3px;line-height:1;white-space:nowrap;color:#222">EDGE WATER INJECTION</div>
<div class="a " style="left:190.5px;top:147.12px;font-size:19px;line-height:1;white-space:nowrap;color:#222">Grid Top (m) 1988-01-01</div>
<div class="a" style="left:18.5px;top:114.3px;width:351px;height:310px;overflow:hidden"><div class="a" style="left:-18.5px;top:-114.3px"><svg class="a" style="left:0;top:0" width="369" height="423"><g transform="matrix(0.87377 0.48634 -0.49849 0.86690 292.10 190.20)"><rect x="30.80" y="21.00" width="54.52" height="9.02" fill="#fc8000"/><rect x="85.30" y="21.00" width="32.72" height="9.02" fill="#fcf800"/><rect x="14.45" y="30.00" width="16.37" height="5.47" fill="#fc8000"/><rect x="30.80" y="30.00" width="38.17" height="5.47" fill="#fcf800"/><rect x="68.95" y="30.00" width="32.72" height="5.47" fill="#a8f400"/><rect x="101.65" y="30.00" width="16.37" height="5.47" fill="#28ec28"/><rect x="118.00" y="30.00" width="5.47" height="5.47" fill="#00f4b0"/><rect x="14.45" y="35.45" width="5.47" height="5.47" fill="#fc8000"/><rect x="19.90" y="35.45" width="38.17" height="5.47" fill="#fcf800"/><rect x="58.05" y="35.45" width="38.17" height="5.47" fill="#a8f400"/><rect x="96.20" y="35.45" width="16.37" height="5.47" fill="#28ec28"/><rect x="112.55" y="35.45" width="10.92" height="5.47" fill="#00f4b0"/><rect x="14.45" y="40.90" width="5.47" height="5.47" fill="#fc8000"/><rect x="19.90" y="40.90" width="27.27" height="5.47" fill="#fcf800"/><rect x="47.15" y="40.90" width="21.82" height="5.47" fill="#a8f400"/><rect x="68.95" y="40.90" width="43.62" height="5.47" fill="#28ec28"/><rect x="112.55" y="40.90" width="10.92" height="5.47" fill="#00f4b0"/><rect x="123.45" y="40.90" width="5.47" height="5.47" fill="#00e4ff"/><rect x="14.45" y="46.35" width="5.47" height="5.47" fill="#fc8000"/><rect x="19.90" y="46.35" width="21.82" height="5.47" fill="#fcf800"/><rect x="41.70" y="46.35" width="16.37" height="5.47" fill="#a8f400"/><rect x="58.05" y="46.35" width="49.07" height="5.47" fill="#28ec28"/><rect x="107.10" y="46.35" width="16.37" height="5.47" fill="#00f4b0"/><rect x="123.45" y="46.35" width="10.92" height="5.47" fill="#00e4ff"/><rect x="14.45" y="51.80" width="5.47" height="5.47" fill="#fc8000"/><rect x="19.90" y="51.80" width="16.37" height="5.47" fill="#fcf800"/><rect x="36.25" y="51.80" width="16.37" height="5.47" fill="#a8f400"/><rect x="52.60" y="51.80" width="10.92" height="5.47" fill="#28ec28"/><rect x="63.50" y="51.80" width="10.92" height="5.47" fill="#00f4b0"/><rect x="74.40" y="51.80" width="10.92" height="5.47" fill="#00e4ff"/><rect x="85.30" y="51.80" width="10.92" height="5.47" fill="#00f4b0"/><rect x="96.20" y="51.80" width="10.92" height="5.47" fill="#28ec28"/><rect x="107.10" y="51.80" width="10.92" height="5.47" fill="#00f4b0"/><rect x="118.00" y="51.80" width="16.37" height="5.47" fill="#00e4ff"/><rect x="14.45" y="57.25" width="5.47" height="5.47" fill="#fc8000"/><rect x="19.90" y="57.25" width="10.92" height="5.47" fill="#fcf800"/><rect x="30.80" y="57.25" width="16.37" height="5.47" fill="#a8f400"/><rect x="47.15" y="57.25" width="10.92" height="5.47" fill="#28ec28"/><rect x="58.05" y="57.25" width="5.47" height="5.47" fill="#00f4b0"/><rect x="63.50" y="57.25" width="21.82" height="5.47" fill="#0090ff"/><rect x="85.30" y="57.25" width="5.47" height="5.47" fill="#00e4ff"/><rect x="90.75" y="57.25" width="5.47" height="5.47" fill="#00f4b0"/><rect x="96.20" y="57.25" width="5.47" height="5.47" fill="#28ec28"/><rect x="101.65" y="57.25" width="16.37" height="5.47" fill="#00f4b0"/><rect x="118.00" y="57.25" width="10.92" height="5.47" fill="#00e4ff"/><rect x="128.90" y="57.25" width="10.92" height="5.47" fill="#0090ff"/><rect x="14.45" y="62.70" width="5.47" height="5.47" fill="#fc8000"/><rect x="19.90" y="62.70" width="10.92" height="5.47" fill="#fcf800"/><rect x="30.80" y="62.70" width="10.92" height="5.47" fill="#a8f400"/><rect x="41.70" y="62.70" width="10.92" height="5.47" fill="#28ec28"/><rect x="52.60" y="62.70" width="5.47" height="5.47" fill="#00f4b0"/><rect x="58.05" y="62.70" width="5.47" height="5.47" fill="#0090ff"/><rect x="63.50" y="62.70" width="16.37" height="5.47" fill="#0038ff"/><rect x="79.85" y="62.70" width="10.92" height="5.47" fill="#0090ff"/><rect x="90.75" y="62.70" width="27.27" height="5.47" fill="#00f4b0"/><rect x="118.00" y="62.70" width="10.92" height="5.47" fill="#00e4ff"/><rect x="128.90" y="62.70" width="10.92" height="5.47" fill="#0090ff"/><rect x="14.45" y="68.15" width="5.47" height="5.47" fill="#fc8000"/><rect x="19.90" y="68.15" width="10.92" height="5.47" fill="#fcf800"/><rect x="30.80" y="68.15" width="10.92" height="5.47" fill="#a8f400"/><rect x="41.70" y="68.15" width="5.47" height="5.47" fill="#28ec28"/><rect x="47.15" y="68.15" width="5.47" height="5.47" fill="#00f4b0"/><rect x="52.60" y="68.15" width="5.47" height="5.47" fill="#00e4ff"/><rect x="58.05" y="68.15" width="5.47" height="5.47" fill="#0038ff"/><rect x="63.50" y="68.15" width="10.92" height="5.47" fill="#0000ec"/><rect x="74.40" y="68.15" width="10.92" height="5.47" fill="#0038ff"/><rect x="85.30" y="68.15" width="5.47" height="5.47" fill="#0090ff"/><rect x="90.75" y="68.15" width="5.47" height="5.47" fill="#00e4ff"/><rect x="96.20" y="68.15" width="21.82" height="5.47" fill="#00f4b0"/><rect x="118.00" y="68.15" width="10.92" height="5.47" fill="#00e4ff"/><rect x="128.90" y="68.15" width="16.37" height="5.47" fill="#0090ff"/><rect x="19.90" y="73.60" width="5.47" height="5.47" fill="#fc8000"/><rect x="25.35" y="73.60" width="16.37" height="5.47" fill="#a8f400"/><rect x="41.70" y="73.60" width="5.47" height="5.47" fill="#28ec28"/><rect x="47.15" y="73.60" width="5.47" height="5.47" fill="#00f4b0"/><rect x="52.60" y="73.60" width="5.47" height="5.47" fill="#00e4ff"/><rect x="58.05" y="73.60" width="5.47" height="5.47" fill="#0090ff"/><rect x="63.50" y="73.60" width="5.47" height="5.47" fill="#0038ff"/><rect x="68.95" y="73.60" width="10.92" height="5.47" fill="#0000ec"/><rect x="79.85" y="73.60" width="5.47" height="5.47" fill="#0038ff"/><rect x="85.30" y="73.60" width="5.47" height="5.47" fill="#0090ff"/><rect x="90.75" y="73.60" width="5.47" height="5.47" fill="#00e4ff"/><rect x="96.20" y="73.60" width="21.82" height="5.47" fill="#00f4b0"/><rect x="118.00" y="73.60" width="16.37" height="5.47" fill="#00e4ff"/><rect x="134.35" y="73.60" width="10.92" height="5.47" fill="#0090ff"/><rect x="19.90" y="79.05" width="5.47" height="5.47" fill="#fc8000"/><rect x="25.35" y="79.05" width="16.37" height="5.47" fill="#a8f400"/><rect x="41.70" y="79.05" width="10.92" height="5.47" fill="#28ec28"/><rect x="52.60" y="79.05" width="5.47" height="5.47" fill="#00f4b0"/><rect x="58.05" y="79.05" width="5.47" height="5.47" fill="#0090ff"/><rect x="63.50" y="79.05" width="10.92" height="5.47" fill="#0038ff"/><rect x="74.40" y="79.05" width="5.47" height="5.47" fill="#0000ec"/><rect x="79.85" y="79.05" width="5.47" height="5.47" fill="#0038ff"/><rect x="85.30" y="79.05" width="5.47" height="5.47" fill="#0090ff"/><rect x="90.75" y="79.05" width="5.47" height="5.47" fill="#00e4ff"/><rect x="96.20" y="79.05" width="5.47" height="5.47" fill="#00f4b0"/><rect x="101.65" y="79.05" width="5.47" height="5.47" fill="#28ec28"/><rect x="107.10" y="79.05" width="16.37" height="5.47" fill="#00f4b0"/><rect x="123.45" y="79.05" width="27.27" height="5.47" fill="#00e4ff"/><rect x="19.90" y="84.50" width="5.47" height="5.47" fill="#fc8000"/><rect x="25.35" y="84.50" width="5.47" height="5.47" fill="#fcf800"/><rect x="30.80" y="84.50" width="16.37" height="5.47" fill="#a8f400"/><rect x="47.15" y="84.50" width="10.92" height="5.47" fill="#28ec28"/><rect x="58.05" y="84.50" width="5.47" height="5.47" fill="#00f4b0"/><rect x="63.50" y="84.50" width="5.47" height="5.47" fill="#0090ff"/><rect x="68.95" y="84.50" width="5.47" height="5.47" fill="#0038ff"/><rect x="74.40" y="84.50" width="5.47" height="5.47" fill="#0000ec"/><rect x="79.85" y="84.50" width="5.47" height="5.47" fill="#0038ff"/><rect x="85.30" y="84.50" width="5.47" height="5.47" fill="#0090ff"/><rect x="90.75" y="84.50" width="5.47" height="5.47" fill="#00e4ff"/><rect x="96.20" y="84.50" width="10.92" height="5.47" fill="#28ec28"/><rect x="107.10" y="84.50" width="21.82" height="5.47" fill="#00f4b0"/><rect x="128.90" y="84.50" width="27.27" height="5.47" fill="#00e4ff"/><rect x="19.90" y="89.95" width="5.47" height="5.47" fill="#fc8000"/><rect x="25.35" y="89.95" width="5.47" height="5.47" fill="#fcf800"/><rect x="30.80" y="89.95" width="16.37" height="5.47" fill="#a8f400"/><rect x="47.15" y="89.95" width="10.92" height="5.47" fill="#28ec28"/><rect x="58.05" y="89.95" width="5.47" height="5.47" fill="#00f4b0"/><rect x="63.50" y="89.95" width="5.47" height="5.47" fill="#0090ff"/><rect x="68.95" y="89.95" width="5.47" height="5.47" fill="#0038ff"/><rect x="74.40" y="89.95" width="5.47" height="5.47" fill="#0000ec"/><rect x="79.85" y="89.95" width="5.47" height="5.47" fill="#0038ff"/><rect x="85.30" y="89.95" width="5.47" height="5.47" fill="#0090ff"/><rect x="90.75" y="89.95" width="5.47" height="5.47" fill="#00e4ff"/><rect x="96.20" y="89.95" width="16.37" height="5.47" fill="#28ec28"/><rect x="112.55" y="89.95" width="27.27" height="5.47" fill="#00f4b0"/><rect x="139.80" y="89.95" width="10.92" height="5.47" fill="#00e4ff"/><rect x="150.70" y="89.95" width="5.47" height="5.47" fill="#00f4b0"/><rect x="25.35" y="95.40" width="5.47" height="5.47" fill="#fc8000"/><rect x="30.80" y="95.40" width="5.47" height="5.47" fill="#fcf800"/><rect x="36.25" y="95.40" width="16.37" height="5.47" fill="#a8f400"/><rect x="52.60" y="95.40" width="5.47" height="5.47" fill="#28ec28"/><rect x="58.05" y="95.40" width="5.47" height="5.47" fill="#00f4b0"/><rect x="63.50" y="95.40" width="5.47" height="5.47" fill="#0090ff"/><rect x="68.95" y="95.40" width="5.47" height="5.47" fill="#0038ff"/><rect x="74.40" y="95.40" width="5.47" height="5.47" fill="#0000ec"/><rect x="79.85" y="95.40" width="5.47" height="5.47" fill="#0038ff"/><rect x="85.30" y="95.40" width="5.47" height="5.47" fill="#0090ff"/><rect x="90.75" y="95.40" width="5.47" height="5.47" fill="#00f4b0"/><rect x="96.20" y="95.40" width="21.82" height="5.47" fill="#28ec28"/><rect x="118.00" y="95.40" width="43.62" height="5.47" fill="#00f4b0"/><rect x="25.35" y="100.85" width="5.47" height="5.47" fill="#fc8000"/><rect x="30.80" y="100.85" width="5.47" height="5.47" fill="#fcf800"/><rect x="36.25" y="100.85" width="16.37" height="5.47" fill="#a8f400"/><rect x="52.60" y="100.85" width="5.47" height="5.47" fill="#28ec28"/><rect x="58.05" y="100.85" width="5.47" height="5.47" fill="#00f4b0"/><rect x="63.50" y="100.85" width="5.47" height="5.47" fill="#0090ff"/><rect x="68.95" y="100.85" width="5.47" height="5.47" fill="#0038ff"/><rect x="74.40" y="100.85" width="5.47" height="5.47" fill="#0000ec"/><rect x="79.85" y="100.85" width="5.47" height="5.47" fill="#0038ff"/><rect x="85.30" y="100.85" width="5.47" height="5.47" fill="#0090ff"/><rect x="90.75" y="100.85" width="5.47" height="5.47" fill="#00f4b0"/><rect x="96.20" y="100.85" width="27.27" height="5.47" fill="#28ec28"/><rect x="123.45" y="100.85" width="10.92" height="5.47" fill="#a8f400"/><rect x="134.35" y="100.85" width="10.92" height="5.47" fill="#fcf800"/><rect x="145.25" y="100.85" width="5.47" height="5.47" fill="#fc8000"/><rect x="25.35" y="106.30" width="5.47" height="5.47" fill="#fc8000"/><rect x="30.80" y="106.30" width="5.47" height="5.47" fill="#fcf800"/><rect x="36.25" y="106.30" width="16.37" height="5.47" fill="#a8f400"/><rect x="52.60" y="106.30" width="5.47" height="5.47" fill="#28ec28"/><rect x="58.05" y="106.30" width="5.47" height="5.47" fill="#00f4b0"/><rect x="63.50" y="106.30" width="5.47" height="5.47" fill="#0090ff"/><rect x="68.95" y="106.30" width="5.47" height="5.47" fill="#0038ff"/><rect x="74.40" y="106.30" width="5.47" height="5.47" fill="#0000ec"/><rect x="79.85" y="106.30" width="5.47" height="5.47" fill="#0038ff"/><rect x="85.30" y="106.30" width="5.47" height="5.47" fill="#0090ff"/><rect x="90.75" y="106.30" width="5.47" height="5.47" fill="#00f4b0"/><rect x="96.20" y="106.30" width="5.47" height="5.47" fill="#28ec28"/><rect x="101.65" y="106.30" width="10.92" height="5.47" fill="#a8f400"/><rect x="112.55" y="106.30" width="10.92" height="5.47" fill="#28ec28"/><rect x="123.45" y="106.30" width="5.47" height="5.47" fill="#a8f400"/><rect x="128.90" y="106.30" width="10.92" height="5.47" fill="#fcf800"/><rect x="139.80" y="106.30" width="5.47" height="5.47" fill="#fc8000"/><rect x="25.35" y="111.75" width="5.47" height="5.47" fill="#fc8000"/><rect x="30.80" y="111.75" width="5.47" height="5.47" fill="#fcf800"/><rect x="36.25" y="111.75" width="16.37" height="5.47" fill="#a8f400"/><rect x="52.60" y="111.75" width="5.47" height="5.47" fill="#28ec28"/><rect x="58.05" y="111.75" width="5.47" height="5.47" fill="#00f4b0"/><rect x="63.50" y="111.75" width="5.47" height="5.47" fill="#0090ff"/><rect x="68.95" y="111.75" width="5.47" height="5.47" fill="#0038ff"/><rect x="74.40" y="111.75" width="5.47" height="5.47" fill="#0000ec"/><rect x="79.85" y="111.75" width="5.47" height="5.47" fill="#0038ff"/><rect x="85.30" y="111.75" width="5.47" height="5.47" fill="#0090ff"/><rect x="90.75" y="111.75" width="5.47" height="5.47" fill="#00f4b0"/><rect x="96.20" y="111.75" width="5.47" height="5.47" fill="#28ec28"/><rect x="101.65" y="111.75" width="27.27" height="5.47" fill="#a8f400"/><rect x="128.90" y="111.75" width="10.92" height="5.47" fill="#fcf800"/><rect x="139.80" y="111.75" width="5.47" height="5.47" fill="#fc8000"/><rect x="25.35" y="117.20" width="5.47" height="5.47" fill="#fc8000"/><rect x="30.80" y="117.20" width="5.47" height="5.47" fill="#fcf800"/><rect x="36.25" y="117.20" width="16.37" height="5.47" fill="#a8f400"/><rect x="52.60" y="117.20" width="5.47" height="5.47" fill="#28ec28"/><rect x="58.05" y="117.20" width="5.47" height="5.47" fill="#00f4b0"/><rect x="63.50" y="117.20" width="5.47" height="5.47" fill="#0090ff"/><rect x="68.95" y="117.20" width="5.47" height="5.47" fill="#0038ff"/><rect x="74.40" y="117.20" width="5.47" height="5.47" fill="#0000ec"/><rect x="79.85" y="117.20" width="5.47" height="5.47" fill="#0038ff"/><rect x="85.30" y="117.20" width="5.47" height="5.47" fill="#0090ff"/><rect x="90.75" y="117.20" width="5.47" height="5.47" fill="#00f4b0"/><rect x="96.20" y="117.20" width="5.47" height="5.47" fill="#28ec28"/><rect x="101.65" y="117.20" width="21.82" height="5.47" fill="#a8f400"/><rect x="123.45" y="117.20" width="10.92" height="5.47" fill="#fcf800"/><rect x="134.35" y="117.20" width="5.47" height="5.47" fill="#fc8000"/><rect x="25.35" y="122.65" width="5.47" height="5.47" fill="#fc8000"/><rect x="30.80" y="122.65" width="5.47" height="5.47" fill="#fcf800"/><rect x="36.25" y="122.65" width="16.37" height="5.47" fill="#a8f400"/><rect x="52.60" y="122.65" width="5.47" height="5.47" fill="#28ec28"/><rect x="58.05" y="122.65" width="5.47" height="5.47" fill="#00f4b0"/><rect x="63.50" y="122.65" width="5.47" height="5.47" fill="#0090ff"/><rect x="68.95" y="122.65" width="5.47" height="5.47" fill="#0038ff"/><rect x="74.40" y="122.65" width="5.47" height="5.47" fill="#0000ec"/><rect x="79.85" y="122.65" width="5.47" height="5.47" fill="#0038ff"/><rect x="85.30" y="122.65" width="5.47" height="5.47" fill="#00e4ff"/><rect x="90.75" y="122.65" width="10.92" height="5.47" fill="#28ec28"/><rect x="101.65" y="122.65" width="21.82" height="5.47" fill="#a8f400"/><rect x="123.45" y="122.65" width="10.92" height="5.47" fill="#fcf800"/><rect x="134.35" y="122.65" width="5.47" height="5.47" fill="#fc8000"/><rect x="25.35" y="128.10" width="5.47" height="5.47" fill="#fc8000"/><rect x="30.80" y="128.10" width="5.47" height="5.47" fill="#fcf800"/><rect x="36.25" y="128.10" width="16.37" height="5.47" fill="#a8f400"/><rect x="52.60" y="128.10" width="5.47" height="5.47" fill="#28ec28"/><rect x="58.05" y="128.10" width="5.47" height="5.47" fill="#00f4b0"/><rect x="63.50" y="128.10" width="5.47" height="5.47" fill="#0090ff"/><rect x="68.95" y="128.10" width="5.47" height="5.47" fill="#0038ff"/><rect x="74.40" y="128.10" width="5.47" height="5.47" fill="#0000ec"/><rect x="79.85" y="128.10" width="5.47" height="5.47" fill="#0038ff"/><rect x="85.30" y="128.10" width="5.47" height="5.47" fill="#00e4ff"/><rect x="90.75" y="128.10" width="10.92" height="5.47" fill="#28ec28"/><rect x="101.65" y="128.10" width="10.92" height="5.47" fill="#a8f400"/><rect x="112.55" y="128.10" width="16.37" height="5.47" fill="#fcf800"/><rect x="128.90" y="128.10" width="5.47" height="5.47" fill="#fc8000"/><rect x="25.35" y="133.55" width="5.47" height="5.47" fill="#fc8000"/><rect x="30.80" y="133.55" width="5.47" height="5.47" fill="#fcf800"/><rect x="36.25" y="133.55" width="16.37" height="5.47" fill="#a8f400"/><rect x="52.60" y="133.55" width="5.47" height="5.47" fill="#28ec28"/><rect x="58.05" y="133.55" width="5.47" height="5.47" fill="#00f4b0"/><rect x="63.50" y="133.55" width="5.47" height="5.47" fill="#0090ff"/><rect x="68.95" y="133.55" width="10.92" height="5.47" fill="#0038ff"/><rect x="79.85" y="133.55" width="5.47" height="5.47" fill="#0090ff"/><rect x="85.30" y="133.55" width="5.47" height="5.47" fill="#00f4b0"/><rect x="90.75" y="133.55" width="5.47" height="5.47" fill="#28ec28"/><rect x="96.20" y="133.55" width="10.92" height="5.47" fill="#a8f400"/><rect x="107.10" y="133.55" width="16.37" height="5.47" fill="#fcf800"/><rect x="123.45" y="133.55" width="5.47" height="5.47" fill="#fc8000"/><rect x="25.35" y="139.00" width="5.47" height="5.47" fill="#fc8000"/><rect x="30.80" y="139.00" width="5.47" height="5.47" fill="#fcf800"/><rect x="36.25" y="139.00" width="16.37" height="5.47" fill="#a8f400"/><rect x="52.60" y="139.00" width="5.47" height="5.47" fill="#28ec28"/><rect x="58.05" y="139.00" width="5.47" height="5.47" fill="#00f4b0"/><rect x="63.50" y="139.00" width="5.47" height="5.47" fill="#0090ff"/><rect x="68.95" y="139.00" width="10.92" height="5.47" fill="#0038ff"/><rect x="79.85" y="139.00" width="5.47" height="5.47" fill="#0090ff"/><rect x="85.30" y="139.00" width="5.47" height="5.47" fill="#00f4b0"/><rect x="90.75" y="139.00" width="5.47" height="5.47" fill="#28ec28"/><rect x="96.20" y="139.00" width="10.92" height="5.47" fill="#a8f400"/><rect x="107.10" y="139.00" width="16.37" height="5.47" fill="#fcf800"/><rect x="123.45" y="139.00" width="5.47" height="5.47" fill="#fc8000"/><rect x="25.35" y="144.45" width="5.47" height="5.47" fill="#fc8000"/><rect x="30.80" y="144.45" width="10.92" height="5.47" fill="#fcf800"/><rect x="41.70" y="144.45" width="10.92" height="5.47" fill="#a8f400"/><rect x="52.60" y="144.45" width="5.47" height="5.47" fill="#28ec28"/><rect x="58.05" y="144.45" width="5.47" height="5.47" fill="#00e4ff"/><rect x="63.50" y="144.45" width="5.47" height="5.47" fill="#0038ff"/><rect x="68.95" y="144.45" width="16.37" height="5.47" fill="#0090ff"/><rect x="85.30" y="144.45" width="5.47" height="5.47" fill="#00f4b0"/><rect x="90.75" y="144.45" width="5.47" height="5.47" fill="#28ec28"/><rect x="96.20" y="144.45" width="10.92" height="5.47" fill="#a8f400"/><rect x="107.10" y="144.45" width="16.37" height="5.47" fill="#fcf800"/><rect x="123.45" y="144.45" width="5.47" height="5.47" fill="#fc8000"/><rect x="19.90" y="149.90" width="5.47" height="5.47" fill="#fc8000"/><rect x="25.35" y="149.90" width="10.92" height="5.47" fill="#fcf800"/><rect x="36.25" y="149.90" width="10.92" height="5.47" fill="#a8f400"/><rect x="47.15" y="149.90" width="10.92" height="5.47" fill="#28ec28"/><rect x="58.05" y="149.90" width="5.47" height="5.47" fill="#00e4ff"/><rect x="63.50" y="149.90" width="16.37" height="5.47" fill="#0090ff"/><rect x="79.85" y="149.90" width="5.47" height="5.47" fill="#00e4ff"/><rect x="85.30" y="149.90" width="10.92" height="5.47" fill="#28ec28"/><rect x="96.20" y="149.90" width="10.92" height="5.47" fill="#a8f400"/><rect x="107.10" y="149.90" width="16.37" height="5.47" fill="#fcf800"/><rect x="123.45" y="149.90" width="5.47" height="5.47" fill="#fc8000"/><rect x="19.90" y="155.35" width="5.47" height="5.47" fill="#fc8000"/><rect x="25.35" y="155.35" width="10.92" height="5.47" fill="#fcf800"/><rect x="36.25" y="155.35" width="10.92" height="5.47" fill="#a8f400"/><rect x="47.15" y="155.35" width="10.92" height="5.47" fill="#28ec28"/><rect x="58.05" y="155.35" width="21.82" height="5.47" fill="#0090ff"/><rect x="79.85" y="155.35" width="5.47" height="5.47" fill="#00e4ff"/><rect x="85.30" y="155.35" width="10.92" height="5.47" fill="#28ec28"/><rect x="96.20" y="155.35" width="10.92" height="5.47" fill="#a8f400"/><rect x="107.10" y="155.35" width="16.37" height="5.47" fill="#fcf800"/><rect x="123.45" y="155.35" width="5.47" height="5.47" fill="#fc8000"/><rect x="19.90" y="160.80" width="5.47" height="5.47" fill="#fc8000"/><rect x="25.35" y="160.80" width="10.92" height="5.47" fill="#fcf800"/><rect x="36.25" y="160.80" width="10.92" height="5.47" fill="#a8f400"/><rect x="47.15" y="160.80" width="5.47" height="5.47" fill="#28ec28"/><rect x="52.60" y="160.80" width="5.47" height="5.47" fill="#00f4b0"/><rect x="58.05" y="160.80" width="10.92" height="5.47" fill="#0090ff"/><rect x="68.95" y="160.80" width="10.92" height="5.47" fill="#00e4ff"/><rect x="79.85" y="160.80" width="5.47" height="5.47" fill="#00f4b0"/><rect x="85.30" y="160.80" width="5.47" height="5.47" fill="#28ec28"/><rect x="90.75" y="160.80" width="16.37" height="5.47" fill="#a8f400"/><rect x="107.10" y="160.80" width="16.37" height="5.47" fill="#fcf800"/><rect x="123.45" y="160.80" width="5.47" height="5.47" fill="#fc8000"/><rect x="19.90" y="166.25" width="5.47" height="5.47" fill="#fc8000"/><rect x="25.35" y="166.25" width="10.92" height="5.47" fill="#fcf800"/><rect x="36.25" y="166.25" width="10.92" height="5.47" fill="#a8f400"/><rect x="47.15" y="166.25" width="5.47" height="5.47" fill="#28ec28"/><rect x="52.60" y="166.25" width="5.47" height="5.47" fill="#00f4b0"/><rect x="58.05" y="166.25" width="21.82" height="5.47" fill="#00e4ff"/><rect x="79.85" y="166.25" width="5.47" height="5.47" fill="#00f4b0"/><rect x="85.30" y="166.25" width="10.92" height="5.47" fill="#28ec28"/><rect x="96.20" y="166.25" width="10.92" height="5.47" fill="#a8f400"/><rect x="107.10" y="166.25" width="16.37" height="5.47" fill="#fcf800"/><rect x="123.45" y="166.25" width="5.47" height="5.47" fill="#fc8000"/><rect x="19.90" y="171.70" width="5.47" height="5.47" fill="#fc8000"/><rect x="25.35" y="171.70" width="10.92" height="5.47" fill="#fcf800"/><rect x="36.25" y="171.70" width="10.92" height="5.47" fill="#a8f400"/><rect x="47.15" y="171.70" width="5.47" height="5.47" fill="#28ec28"/><rect x="52.60" y="171.70" width="5.47" height="5.47" fill="#00f4b0"/><rect x="58.05" y="171.70" width="21.82" height="5.47" fill="#00e4ff"/><rect x="79.85" y="171.70" width="5.47" height="5.47" fill="#00f4b0"/><rect x="85.30" y="171.70" width="10.92" height="5.47" fill="#28ec28"/><rect x="96.20" y="171.70" width="10.92" height="5.47" fill="#a8f400"/><rect x="107.10" y="171.70" width="16.37" height="5.47" fill="#fcf800"/><rect x="123.45" y="171.70" width="5.47" height="5.47" fill="#fc8000"/><rect x="19.90" y="177.15" width="5.47" height="5.47" fill="#fc8000"/><rect x="25.35" y="177.15" width="10.92" height="5.47" fill="#fcf800"/><rect x="36.25" y="177.15" width="10.92" height="5.47" fill="#a8f400"/><rect x="47.15" y="177.15" width="5.47" height="5.47" fill="#28ec28"/><rect x="52.60" y="177.15" width="27.27" height="5.47" fill="#00e4ff"/><rect x="79.85" y="177.15" width="5.47" height="5.47" fill="#00f4b0"/><rect x="85.30" y="177.15" width="10.92" height="5.47" fill="#28ec28"/><rect x="96.20" y="177.15" width="10.92" height="5.47" fill="#a8f400"/><rect x="107.10" y="177.15" width="16.37" height="5.47" fill="#fcf800"/><rect x="123.45" y="177.15" width="5.47" height="5.47" fill="#fc8000"/><rect x="14.45" y="182.60" width="5.47" height="5.47" fill="#fc8000"/><rect x="19.90" y="182.60" width="16.37" height="5.47" fill="#fcf800"/><rect x="36.25" y="182.60" width="10.92" height="5.47" fill="#a8f400"/><rect x="47.15" y="182.60" width="5.47" height="5.47" fill="#28ec28"/><rect x="52.60" y="182.60" width="27.27" height="5.47" fill="#00e4ff"/><rect x="79.85" y="182.60" width="5.47" height="5.47" fill="#00f4b0"/><rect x="85.30" y="182.60" width="10.92" height="5.47" fill="#28ec28"/><rect x="96.20" y="182.60" width="10.92" height="5.47" fill="#a8f400"/><rect x="107.10" y="182.60" width="10.92" height="5.47" fill="#fcf800"/><rect x="118.00" y="182.60" width="5.47" height="5.47" fill="#fc8000"/><rect x="14.45" y="188.05" width="5.47" height="5.47" fill="#fc8000"/><rect x="19.90" y="188.05" width="16.37" height="5.47" fill="#fcf800"/><rect x="36.25" y="188.05" width="5.47" height="5.47" fill="#a8f400"/><rect x="41.70" y="188.05" width="10.92" height="5.47" fill="#28ec28"/><rect x="52.60" y="188.05" width="27.27" height="5.47" fill="#00e4ff"/><rect x="79.85" y="188.05" width="5.47" height="5.47" fill="#00f4b0"/><rect x="85.30" y="188.05" width="10.92" height="5.47" fill="#28ec28"/><rect x="96.20" y="188.05" width="10.92" height="5.47" fill="#a8f400"/><rect x="107.10" y="188.05" width="10.92" height="5.47" fill="#fcf800"/><rect x="118.00" y="188.05" width="5.47" height="5.47" fill="#fc8000"/><rect x="14.45" y="193.50" width="21.82" height="5.47" fill="#fcf800"/><rect x="36.25" y="193.50" width="10.92" height="5.47" fill="#a8f400"/><rect x="47.15" y="193.50" width="5.47" height="5.47" fill="#28ec28"/><rect x="52.60" y="193.50" width="27.27" height="5.47" fill="#00e4ff"/><rect x="79.85" y="193.50" width="5.47" height="5.47" fill="#00f4b0"/><rect x="85.30" y="193.50" width="10.92" height="5.47" fill="#28ec28"/><rect x="96.20" y="193.50" width="10.92" height="5.47" fill="#a8f400"/><rect x="107.10" y="193.50" width="10.92" height="5.47" fill="#fcf800"/><rect x="118.00" y="193.50" width="5.47" height="5.47" fill="#fc8000"/><rect x="14.45" y="198.95" width="21.82" height="5.47" fill="#fcf800"/><rect x="36.25" y="198.95" width="10.92" height="5.47" fill="#a8f400"/><rect x="47.15" y="198.95" width="5.47" height="5.47" fill="#28ec28"/><rect x="52.60" y="198.95" width="27.27" height="5.47" fill="#00e4ff"/><rect x="79.85" y="198.95" width="5.47" height="5.47" fill="#00f4b0"/><rect x="85.30" y="198.95" width="10.92" height="5.47" fill="#28ec28"/><rect x="96.20" y="198.95" width="10.92" height="5.47" fill="#a8f400"/><rect x="107.10" y="198.95" width="10.92" height="5.47" fill="#fcf800"/><rect x="118.00" y="198.95" width="5.47" height="5.47" fill="#fc8000"/><rect x="14.45" y="204.40" width="21.82" height="5.47" fill="#fcf800"/><rect x="36.25" y="204.40" width="10.92" height="5.47" fill="#a8f400"/><rect x="47.15" y="204.40" width="5.47" height="5.47" fill="#28ec28"/><rect x="52.60" y="204.40" width="27.27" height="5.47" fill="#00e4ff"/><rect x="79.85" y="204.40" width="5.47" height="5.47" fill="#00f4b0"/><rect x="85.30" y="204.40" width="10.92" height="5.47" fill="#28ec28"/><rect x="96.20" y="204.40" width="10.92" height="5.47" fill="#a8f400"/><rect x="107.10" y="204.40" width="10.92" height="5.47" fill="#fcf800"/><rect x="118.00" y="204.40" width="5.47" height="5.47" fill="#fc8000"/><rect x="14.45" y="209.85" width="21.82" height="5.47" fill="#fcf800"/><rect x="36.25" y="209.85" width="10.92" height="5.47" fill="#a8f400"/><rect x="47.15" y="209.85" width="5.47" height="5.47" fill="#28ec28"/><rect x="52.60" y="209.85" width="5.47" height="5.47" fill="#00f4b0"/><rect x="58.05" y="209.85" width="16.37" height="5.47" fill="#00e4ff"/><rect x="74.40" y="209.85" width="10.92" height="5.47" fill="#00f4b0"/><rect x="85.30" y="209.85" width="10.92" height="5.47" fill="#28ec28"/><rect x="96.20" y="209.85" width="10.92" height="5.47" fill="#a8f400"/><rect x="107.10" y="209.85" width="10.92" height="5.47" fill="#fcf800"/><rect x="118.00" y="209.85" width="5.47" height="5.47" fill="#fc8000"/><rect x="14.45" y="215.30" width="21.82" height="5.47" fill="#fcf800"/><rect x="36.25" y="215.30" width="10.92" height="5.47" fill="#a8f400"/><rect x="47.15" y="215.30" width="5.47" height="5.47" fill="#28ec28"/><rect x="52.60" y="215.30" width="5.47" height="5.47" fill="#00f4b0"/><rect x="58.05" y="215.30" width="5.47" height="5.47" fill="#00e4ff"/><rect x="63.50" y="215.30" width="21.82" height="5.47" fill="#00f4b0"/><rect x="85.30" y="215.30" width="10.92" height="5.47" fill="#28ec28"/><rect x="96.20" y="215.30" width="10.92" height="5.47" fill="#a8f400"/><rect x="107.10" y="215.30" width="10.92" height="5.47" fill="#fcf800"/><rect x="14.45" y="220.75" width="21.82" height="5.47" fill="#fcf800"/><rect x="36.25" y="220.75" width="10.92" height="5.47" fill="#a8f400"/><rect x="47.15" y="220.75" width="5.47" height="5.47" fill="#28ec28"/><rect x="52.60" y="220.75" width="32.72" height="5.47" fill="#00f4b0"/><rect x="85.30" y="220.75" width="10.92" height="5.47" fill="#28ec28"/><rect x="96.20" y="220.75" width="10.92" height="5.47" fill="#a8f400"/><rect x="14.45" y="226.20" width="21.82" height="5.47" fill="#fcf800"/><rect x="36.25" y="226.20" width="10.92" height="5.47" fill="#a8f400"/><rect x="47.15" y="226.20" width="5.47" height="5.47" fill="#28ec28"/><rect x="52.60" y="226.20" width="32.72" height="5.47" fill="#00f4b0"/><rect x="85.30" y="226.20" width="10.92" height="5.47" fill="#28ec28"/><rect x="96.20" y="226.20" width="5.47" height="5.47" fill="#a8f400"/><rect x="14.45" y="231.65" width="21.82" height="5.47" fill="#fcf800"/><rect x="36.25" y="231.65" width="10.92" height="5.47" fill="#a8f400"/><rect x="47.15" y="231.65" width="5.47" height="5.47" fill="#28ec28"/><rect x="52.60" y="231.65" width="32.72" height="5.47" fill="#00f4b0"/><rect x="85.30" y="231.65" width="5.47" height="5.47" fill="#28ec28"/><rect x="14.45" y="237.10" width="21.82" height="5.47" fill="#fcf800"/><rect x="36.25" y="237.10" width="10.92" height="5.47" fill="#a8f400"/><rect x="47.15" y="237.10" width="5.47" height="5.47" fill="#28ec28"/><rect x="52.60" y="237.10" width="27.27" height="5.47" fill="#00f4b0"/><rect x="14.45" y="242.55" width="21.82" height="5.47" fill="#fcf800"/><rect x="36.25" y="242.55" width="10.92" height="5.47" fill="#a8f400"/><rect x="47.15" y="242.55" width="5.47" height="5.47" fill="#28ec28"/><rect x="52.60" y="242.55" width="16.37" height="5.47" fill="#00f4b0"/><rect x="14.45" y="248.00" width="21.82" height="5.47" fill="#fcf800"/><rect x="36.25" y="248.00" width="10.92" height="5.47" fill="#a8f400"/><rect x="47.15" y="248.00" width="5.47" height="5.47" fill="#28ec28"/><rect x="52.60" y="248.00" width="5.47" height="5.47" fill="#00f4b0"/><rect x="14.45" y="253.45" width="21.82" height="5.47" fill="#fcf800"/><rect x="36.25" y="253.45" width="10.92" height="5.47" fill="#a8f400"/><rect x="47.15" y="253.45" width="5.47" height="5.47" fill="#28ec28"/><rect x="14.45" y="258.90" width="21.82" height="5.47" fill="#fcf800"/><rect x="36.25" y="258.90" width="5.47" height="5.47" fill="#a8f400"/><rect x="14.45" y="264.35" width="16.37" height="5.47" fill="#fcf800"/><rect x="14.45" y="269.80" width="5.47" height="5.47" fill="#fcf800"/><path d="M14.45 0V373.4M19.90 0V373.4M25.35 0V373.4M30.80 0V373.4M36.25 0V373.4M41.70 0V373.4M47.15 0V373.4M52.60 0V373.4M58.05 0V373.4M63.50 0V373.4M68.95 0V373.4M74.40 0V373.4M79.85 0V373.4M85.30 0V373.4M90.75 0V373.4M96.20 0V373.4M101.65 0V373.4M107.10 0V373.4M112.55 0V373.4M118.00 0V373.4M123.45 0V373.4M128.90 0V373.4M134.35 0V373.4M139.80 0V373.4M145.25 0V373.4M150.70 0V373.4M156.15 0V373.4M161.60 0V373.4M167.05 0V373.4M172.50 0V373.4M177.95 0V373.4M183.40 0V373.4M188.85 0V373.4M194.30 0V373.4M199.75 0V373.4M205.20 0V373.4M210.65 0V373.4M216.10 0V373.4M221.55 0V373.4M227.00 0V373.4M232.45 0V373.4M237.90 0V373.4M243.35 0V373.4M248.80 0V373.4M254.25 0V373.4M0 30.00H254.2M0 35.45H254.2M0 40.90H254.2M0 46.35H254.2M0 51.80H254.2M0 57.25H254.2M0 62.70H254.2M0 68.15H254.2M0 73.60H254.2M0 79.05H254.2M0 84.50H254.2M0 89.95H254.2M0 95.40H254.2M0 100.85H254.2M0 106.30H254.2M0 111.75H254.2M0 117.20H254.2M0 122.65H254.2M0 128.10H254.2M0 133.55H254.2M0 139.00H254.2M0 144.45H254.2M0 149.90H254.2M0 155.35H254.2M0 160.80H254.2M0 166.25H254.2M0 171.70H254.2M0 177.15H254.2M0 182.60H254.2M0 188.05H254.2M0 193.50H254.2M0 198.95H254.2M0 204.40H254.2M0 209.85H254.2M0 215.30H254.2M0 220.75H254.2M0 226.20H254.2M0 231.65H254.2M0 237.10H254.2M0 242.55H254.2M0 248.00H254.2M0 253.45H254.2M0 258.90H254.2M0 264.35H254.2M0 269.80H254.2M0 275.25H254.2M0 280.70H254.2M0 286.15H254.2M0 291.60H254.2M0 297.05H254.2M0 302.50H254.2M0 307.95H254.2M0 313.40H254.2M0 318.85H254.2M0 324.30H254.2M0 329.75H254.2M0 335.20H254.2M0 340.65H254.2M0 346.10H254.2M0 351.55H254.2M0 357.00H254.2M0 362.45H254.2M0 367.90H254.2M0 373.35H254.2M0 0H254.2M0 0V373.4M9.0 0V373.4" stroke="#303030" stroke-width="0.85" fill="none"/></g><text x="289.0" y="251.6" font-family="Liberation Sans" font-size="13" fill="#111" stroke="#111" stroke-width="0.45" transform="rotate(0)">W-6</text><circle cx="284.0" cy="238.8" r="1.1" fill="#111"/><text x="330.0" y="283.6" font-family="Liberation Sans" font-size="13" fill="#111" stroke="#111" stroke-width="0.45" transform="rotate(0)">W-8</text><circle cx="327.0" cy="270.8" r="1.1" fill="#111"/><text x="290.0" y="301.5" font-family="Liberation Sans" font-size="13" fill="#111" stroke="#111" stroke-width="0.45" transform="rotate(0)">W-5</text><circle cx="286.5" cy="290.0" r="1.1" fill="#111"/><text x="304.0" y="322.0" font-family="Liberation Sans" font-size="13" fill="#111" stroke="#111" stroke-width="0.45" transform="rotate(0)">W-4</text><circle cx="298.0" cy="309.0" r="1.1" fill="#111"/><text x="335.7" y="338.5" font-family="Liberation Sans" font-size="13" fill="#111" stroke="#111" stroke-width="0.45" transform="rotate(0)">W-3</text><circle cx="330.0" cy="327.8" r="1.1" fill="#111"/><text x="240.0" y="375.0" font-family="Liberation Sans" font-size="13" fill="#111" stroke="#111" stroke-width="0.45" transform="rotate(0)">W-17</text><circle cx="235.5" cy="364.4" r="1.1" fill="#111"/><text x="259.0" y="387.0" font-family="Liberation Sans" font-size="13" fill="#111" stroke="#111" stroke-width="0.45" transform="rotate(0)">W-10</text><circle cx="254.0" cy="378.0" r="1.1" fill="#111"/><text x="303.5" y="383.5" font-family="Liberation Sans" font-size="13" fill="#111" stroke="#111" stroke-width="0.45" transform="rotate(0)">W-12</text><circle cx="300.0" cy="370.0" r="1.1" fill="#111"/><text x="245.0" y="421.5" font-family="Liberation Sans" font-size="13" fill="#111" stroke="#111" stroke-width="0.45" transform="rotate(0)">W-13</text><circle cx="240.0" cy="409.6" r="1.1" fill="#111"/><text x="357.0" y="377.0" font-family="Liberation Sans" font-size="13" fill="#111" stroke="#111" stroke-width="0.45" transform="rotate(0)">W-1</text><circle cx="355.0" cy="365.0" r="1.1" fill="#111"/><text x="361.0" y="306.0" font-family="Liberation Sans" font-size="13" fill="#111" stroke="#111" stroke-width="0.45" transform="rotate(0)">W-7</text><circle cx="358.0" cy="295.0" r="1.1" fill="#111"/></svg></div></div>
<svg class="a" style="left:-5px;top:0" width="120" height="424"><ellipse cx="15.5" cy="158" rx="12.5" ry="48.5" fill="none" stroke="#000" stroke-width="2"/><path d="M28 157 L96.5 124.5" stroke="#000" stroke-width="2.2"/></svg>
</div>
<div class="a" style="left:396px;top:1px;width:1.2px;height:424px;background:#8a8a86"></div>

</body></html>
